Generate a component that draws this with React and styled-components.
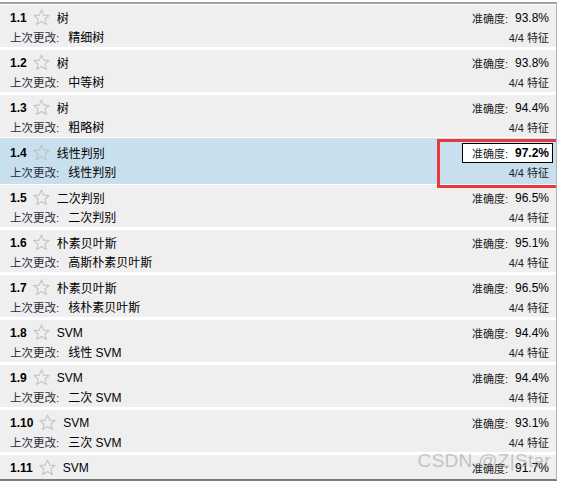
import React from "react";
import styled, { createGlobalStyle } from "styled-components";

const GlobalStyle = createGlobalStyle`
  html, body {
    margin: 0;
    padding: 0;
    background: #fff;
  }
  body {
    font-family: "Liberation Sans", "Noto Sans CJK SC", sans-serif;
    font-size: 12px;
    color: #111;
  }
`;

const Page = styled.div`
  position: relative;
  width: 562px;
  height: 481px;
  padding-top: 2px;
  box-sizing: border-box;
  overflow: hidden;
`;

const List = styled.div`
  width: 557px;
  height: 479px;
  box-sizing: border-box;
  border-top: 2px solid #a3a3a3;
  border-right: 1px solid #b4b4b4;
  border-bottom: 2px solid #7a7a7a;
  overflow: hidden;
  padding-top: 1px;
`;

const Row = styled.div`
  position: relative;
  display: flex;
  justify-content: space-between;
  box-sizing: border-box;
  height: ${(p) => (p.$selected ? "46px" : "42px")};
  margin: ${(p) => (p.$selected ? "-2px 0 1px" : "0 0 3px")};
  padding: ${(p) => (p.$selected ? "5px" : "3px")} 7px 0 10px;
  background: ${(p) => (p.$selected ? "#c8dfee" : "#efefef")};
`;

const Col = styled.div`
  display: flex;
  flex-direction: column;
  align-items: ${(p) => (p.$right ? "flex-end" : "flex-start")};
`;

const Line = styled.div`
  display: flex;
  align-items: center;
  height: 19px;
  white-space: nowrap;
`;

const Num = styled.span`
  font-weight: bold;
  font-size: 12px;
  color: #000;
`;

const Star = styled.svg`
  width: 19px;
  height: 19px;
  margin: 0 6px 0 5px;
`;

const Name = styled.span`
  font-size: 12px;
  color: #000;
`;

const Label = styled.span`
  font-size: 11.5px;
  color: #2b2b38;
  margin-right: 9px;
`;

const AccLabel = styled.span`
  font-size: 11px;
  color: #222;
  margin-right: 7px;
`;

const AccBox = styled.div`
  display: flex;
  align-items: center;
  height: 20px;
  box-sizing: border-box;
  border: ${(p) => (p.$boxed ? "1px solid #000" : "none")};
  background: ${(p) => (p.$boxed ? "#fff" : "transparent")};
  padding: ${(p) => (p.$boxed ? "0 3px 0 9px" : "0")};
  margin-right: ${(p) => (p.$boxed ? "-4px" : "0")};
`;

const AccValue = styled.span`
  font-size: 12px;
  font-weight: ${(p) => (p.$bold ? "bold" : "normal")};
  color: #000;
`;

const Features = styled.span`
  font-size: 11px;
  color: #222;
`;

const Annotation = styled.div`
  position: absolute;
  left: 437px;
  top: 1px;
  width: 122px;
  height: 49px;
  box-sizing: border-box;
  border: 3px solid #e8383a;
  pointer-events: none;
  z-index: 2;
`;

const Watermark = styled.div`
  position: absolute;
  right: 11px;
  bottom: 9px;
  font-family: "Liberation Sans", "Noto Sans CJK SC", sans-serif;
  font-size: 19px;
  color: rgba(150, 150, 150, 0.5);
  letter-spacing: 0.3px;
  z-index: 3;
`;

const StarIcon = () => (
  <Star viewBox="0 0 24 24">
    <polygon
      points="12,2.5 14.8,9 21.8,9.4 16.4,13.9 18.1,20.8 12,17 5.9,20.8 7.6,13.9 2.2,9.4 9.2,9"
      fill="none"
      stroke="#c2c2c2"
      strokeWidth="1.3"
      strokeLinejoin="round"
    />
  </Star>
);

const models = [
  { n: "1.1", type: "树", last: "精细树", acc: "93.8%" },
  { n: "1.2", type: "树", last: "中等树", acc: "93.8%" },
  { n: "1.3", type: "树", last: "粗略树", acc: "94.4%" },
  { n: "1.4", type: "线性判别", last: "线性判别", acc: "97.2%", selected: true },
  { n: "1.5", type: "二次判别", last: "二次判别", acc: "96.5%" },
  { n: "1.6", type: "朴素贝叶斯", last: "高斯朴素贝叶斯", acc: "95.1%" },
  { n: "1.7", type: "朴素贝叶斯", last: "核朴素贝叶斯", acc: "96.5%" },
  { n: "1.8", type: "SVM", last: "线性 SVM", acc: "94.4%" },
  { n: "1.9", type: "SVM", last: "二次 SVM", acc: "94.4%" },
  { n: "1.10", type: "SVM", last: "三次 SVM", acc: "93.1%" },
  { n: "1.11", type: "SVM", last: "", acc: "91.7%" },
];

export default function App() {
  return (
    <>
      <GlobalStyle />
      <Page>
        <List>
          {models.map((m) => (
            <Row key={m.n} $selected={m.selected}>
              <Col>
                <Line>
                  <Num>{m.n}</Num>
                  <StarIcon />
                  <Name>{m.type}</Name>
                </Line>
                <Line>
                  <Label>上次更改:</Label>
                  <Name>{m.last}</Name>
                </Line>
              </Col>
              <Col $right>
                <Line>
                  <AccBox $boxed={m.selected}>
                    <AccLabel>准确度:</AccLabel>
                    <AccValue $bold={m.selected}>{m.acc}</AccValue>
                  </AccBox>
                </Line>
                <Line>
                  <Features>4/4 特征</Features>
                </Line>
              </Col>
              {m.selected && <Annotation />}
            </Row>
          ))}
        </List>
        <Watermark>CSDN @Z|Star</Watermark>
      </Page>
    </>
  );
}
